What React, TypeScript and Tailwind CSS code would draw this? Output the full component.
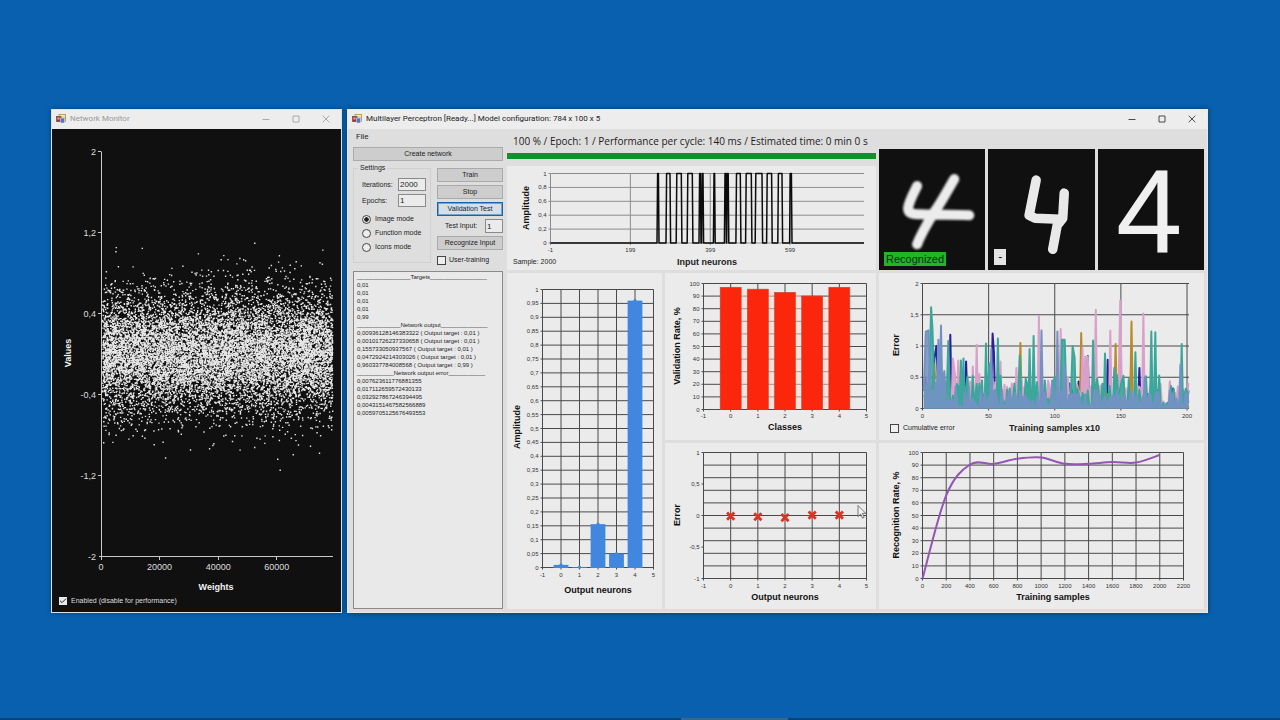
import { ReactNode } from "react";
import { Check } from "lucide-react";

type Series = { color: string; peaks: [number, number][]; noise: number; seed: number; filled?: boolean };

type ChartProps = {
  label: string;
  width: number;
  height: number;
  plot: { left: number; right: number; top: number; bottom: number };
  xRange: [number, number];
  yRange: [number, number];
  xTicks: number[];
  yTicks: number[];
  xGrid?: number[];
  yGrid?: number[];
  gridColor?: string;
  tickLabelY: number;
  xTitle?: string;
  xTitleAt?: [number, number];
  yTitle: string;
  yTitleAt: [number, number];
  yFormat?: (v: number) => string;
  children: (sx: (v: number) => number, sy: (v: number) => number) => ReactNode;
};

const range = (from: number, to: number, step: number) =>
  Array.from({ length: Math.round((to - from) / step) + 1 }, (_, i) => Number((from + i * step).toFixed(4)));

const comma = (v: number) => String(v).replace(".", ",");

// Small seeded generator so the plots are the same on every render
const random = (seed: number) => {
  let s = seed;
  return () => {
    s = (s + 0x6d2b79f5) | 0;
    let t = Math.imul(s ^ (s >>> 15), 1 | s);
    t = (t + Math.imul(t ^ (t >>> 7), 61 | t)) ^ t;
    return ((t ^ (t >>> 14)) >>> 0) / 4294967296;
  };
};

const weightDots = () => {
  const rnd = random(42);
  let d = "";
  for (let i = 0; i < 12000; i++) {
    const x = 50 + rnd() * 230;
    const g = Math.sqrt(-2 * Math.log(rnd() + 1e-9)) * Math.cos(2 * Math.PI * rnd());
    const y = 224 + g * 30;
    d += `M${x.toFixed(1)} ${y.toFixed(1)}h1.4`;
  }
  return d;
};

const WEIGHTS = weightDots();

const TARGETS = ["0,01", "0,01", "0,01", "0,01", "0,99"];
const OUTPUTS = ["0,00936128146383322", "0,00101726237330658", "0,155733050937567", "0,0472924214303026", "0,960337784008568"];
const ERRORS = ["0,007623611776881355", "0,017112659572430133", "0,032927867246394495", "0,0043151467582566889", "0,0059705125676493553"];

const LOG = [
  "_".repeat(16) + "Targets" + "_".repeat(17),
  ...TARGETS,
  "_".repeat(13) + "Network output" + "_".repeat(14),
  ...OUTPUTS.map((o, i) => `${o} ( Output target : ${TARGETS[i]} )`),
  "_".repeat(11) + "Network output error" + "_".repeat(11),
  ...ERRORS,
].join("\n");

// Left and right edge of every pulse in the input signal
const PULSES = [
  [150.6, 151.4], [159.6, 163], [169.8, 174.3], [180.8, 185.3], [192.6, 193.4], [195.2, 196],
  [207, 207.6], [218, 218.8], [220.3, 221.2], [229.5, 233.3], [239.2, 244.3], [248.8, 255],
  [260.2, 264.6], [271.4, 275], [283.2, 284.4],
];

const SERIES: Series[] = [
  {
    color: "#2a1f9e", seed: 3, noise: 0.07,
    peaks: [[2, 0.5], [9, 0.8], [10.5, 1], [21, 1.18], [33, 0.75], [53, 1.2], [54, 0.9], [111, 0.4], [118, 0.43], [125, 0.84], [140, 0.78], [164, 0.65], [170, 0.23], [189.5, 0.32]],
  },
  {
    color: "#b98a26", seed: 5, noise: 0.07,
    peaks: [[5, 0.6], [9, 0.7], [15, 0.4], [74, 1.05], [110.5, 0.25], [120, 1.21], [146, 1.03], [152, 0.43], [154, 0.27], [158, 1.39], [191, 0.2]],
  },
  {
    color: "#d9a1c9", seed: 7, noise: 0.12, filled: true,
    peaks: [[4, 0.5], [23, 0.8], [24.5, 0.55], [27, 0.77], [38, 0.67], [41, 1.02], [43, 0.55], [59, 0.75], [62, 0.38], [67.5, 0.4], [71, 0.65], [88, 1.48], [100, 0.47], [104.5, 1.27], [121, 0.96], [123, 0.83], [125, 0.83], [131, 1.58], [134.5, 0.37], [142, 1.25], [149.5, 1.73], [167, 1.52], [193, 0.35], [201, 0.4]],
  },
  {
    color: "#3ba79b", seed: 11, noise: 0.13, filled: true,
    peaks: [[6.5, 1.62], [7.5, 1.3], [19.5, 1.08], [29, 0.77], [31, 0.8], [38, 0.52], [45, 0.45], [48, 1.04], [50.5, 0.72], [57, 1.12], [69.5, 0.4], [73.5, 0.85], [81, 0.95], [84, 1.16], [86.5, 0.42], [92.5, 0.45], [105.5, 1.1], [107.5, 1.1], [113.5, 1], [115, 0.82], [129, 1.09], [138, 0.88], [141.5, 0.36], [145, 0.65], [156, 0.47], [161, 0.9], [173, 1.23], [176, 1.22], [179, 0.53], [188, 0.36], [196, 1.03]],
  },
  {
    color: "#7392c4", seed: 13, noise: 0.07, filled: true,
    peaks: [[2.5, 1.23], [4.5, 1.25], [12, 1.1], [14, 1.33], [16.5, 0.6], [25, 0.35], [35, 0.35], [44, 0.3], [52, 0.95], [60, 0.3], [90, 1.25], [98, 0.45], [102, 1.23], [107.5, 0.7], [168, 0.5], [195, 0.7], [199, 0.25]],
  },
];

const seriesPoints = (s: Series): [number, number][] => {
  const rnd = random(s.seed);
  const pts: [number, number][] = [];
  for (let i = 1; i <= 201; i++) {
    const r = rnd();
    if (s.peaks.some(([p]) => Math.abs(p - i) < 1)) continue;
    if (s.peaks.some(([p]) => Math.abs(p - i) < 2)) {
      pts.push([i, i < 18 ? 0.3 : 0.03]);
      continue;
    }
    const early = i < 18 ? 0.2 : 0.02;
    const calm = i > 180 && i < 187 ? 0.2 : 1;
    pts.push([i, early + r * r * s.noise * 4 * calm]);
  }
  s.peaks.forEach((p) => pts.push(p));
  return pts.sort((a, b) => a[0] - b[0]);
};

const RATE: [number, number][] = [
  [0, 0], [200, 66], [400, 90.5], [600, 91], [800, 95], [1000, 96], [1200, 91], [1400, 91], [1600, 92.5], [1800, 92], [2000, 98],
];

// Catmull-Rom spline written as cubic Béziers
const spline = (p: [number, number][]) => {
  let d = `M${p[0][0]} ${p[0][1]}`;
  for (let i = 0; i < p.length - 1; i++) {
    const a = p[i - 1] ?? p[i];
    const b = p[i];
    const c = p[i + 1];
    const e = p[i + 2] ?? c;
    d += `C${b[0] + (c[0] - a[0]) / 6} ${b[1] + (c[1] - a[1]) / 6} ${c[0] - (e[0] - b[0]) / 6} ${c[1] - (e[1] - b[1]) / 6} ${c[0]} ${c[1]}`;
  }
  return d;
};

const Chart = ({
  label, width, height, plot, xRange, yRange, xTicks, yTicks, xGrid = xTicks, yGrid = yTicks,
  gridColor = "#4a4a4a", tickLabelY, xTitle, xTitleAt, yTitle, yTitleAt, yFormat = comma, children,
}: ChartProps) => {
  const sx = (v: number) => plot.left + ((v - xRange[0]) / (xRange[1] - xRange[0])) * (plot.right - plot.left);
  const sy = (v: number) => plot.bottom - ((v - yRange[0]) / (yRange[1] - yRange[0])) * (plot.bottom - plot.top);
  return (
    <svg viewBox={`0 0 ${width} ${height}`} className="block w-full font-['Liberation_Sans',sans-serif]" role="img" aria-label={label}>
      <g stroke={gridColor} strokeWidth="1">
        {xGrid.map((v) => <path key={`x${v}`} d={`M${sx(v)} ${plot.top}V${plot.bottom + 2}`} />)}
        {yGrid.map((v) => <path key={`y${v}`} d={`M${plot.left} ${sy(v)}H${plot.right}`} />)}
        {yTicks.map((v) => <path key={`t${v}`} d={`M${plot.left - 2} ${sy(v)}h2`} />)}
      </g>
      {children(sx, sy)}
      <g fontSize="6" fill="#333">
        {xTicks.map((v) => <text key={v} x={sx(v)} y={tickLabelY + 2} textAnchor="middle">{v}</text>)}
        {yTicks.map((v) => <text key={v} x={plot.left - 4} y={sy(v) + 2} textAnchor="end">{yFormat(v)}</text>)}
      </g>
      <g fontSize="9" fontWeight="700" fill="#111" textAnchor="middle">
        {xTitle && xTitleAt && <text x={xTitleAt[0]} y={xTitleAt[1] + 3}>{xTitle}</text>}
        <text transform={`translate(${yTitleAt[0] + 3} ${yTitleAt[1]}) rotate(-90)`}>{yTitle}</text>
      </g>
    </svg>
  );
};

const AppIcon = () => (
  <svg viewBox="0 0 10 10" className="size-[10px] shrink-0" aria-hidden="true">
    <rect x="3" y="0.5" width="6.5" height="7" fill="#e3c65c" stroke="#8d7a3a" strokeWidth="0.6" />
    <rect x="3.5" y="1" width="5.5" height="1.5" fill="#f7edc0" />
    <rect x="0.5" y="2.5" width="4.5" height="5" fill="#a5323a" stroke="#6d3434" strokeWidth="0.6" />
    <rect x="4.5" y="4" width="4" height="5" fill="#4a7ac0" stroke="#dfe6ee" strokeWidth="0.6" />
    <path d="M1.5 3.5h2v2h-2z" fill="#e8b5a8" />
  </svg>
);

const TitleBar = ({ title, active }: { title: string; active?: boolean }) => (
  <header className={`flex h-[19px] items-center bg-[#ededed] pb-0.5 pl-1 ${active ? "text-[#222]" : "text-[#999]"}`}>
    <AppIcon />
    <h1 className="min-w-0 flex-1 truncate pl-1 font-[Roboto,sans-serif] text-[8px] leading-3">{title}</h1>
    <button type="button" aria-label="Minimize" className="flex h-full w-[30px] items-center justify-center">
      <svg viewBox="0 0 8 8" className="size-2" stroke="currentColor" strokeWidth="0.8" fill="none"><path d="M0.5 4.5h7" /></svg>
    </button>
    <button type="button" aria-label="Maximize" className="flex h-full w-[30px] items-center justify-center">
      <svg viewBox="0 0 8 8" className="size-2" stroke="currentColor" strokeWidth="0.8" fill="none"><path d="M1 1h6v6h-6z" /></svg>
    </button>
    <button type="button" aria-label="Close" className="flex h-full w-[30px] items-center justify-center">
      <svg viewBox="0 0 8 8" className="size-2" stroke="currentColor" strokeWidth="0.8" fill="none"><path d="M0.7 0.7l6.6 6.6M7.3 0.7l-6.6 6.6" /></svg>
    </button>
  </header>
);

const PushButton = ({ children, focused }: { children: ReactNode; focused?: boolean }) => (
  <button
    type="button"
    className={`h-[14px] w-full border text-center leading-3 ${focused ? "border-[#1565ad] bg-[#d3e0ea] ring-1 ring-[#1565ad]/50 ring-inset" : "border-[#aaa] bg-[#cdcdcd]"}`}
  >
    {children}
  </button>
);

const Panel = ({ children }: { children: ReactNode }) => <section className="bg-[#ebebeb]">{children}</section>;

const NetworkMonitor = () => (
  <article className="flex min-w-0 flex-col border border-[#d8e2ea] bg-[#101010] shadow-[0_0_4px_rgba(0,0,0,0.35)]">
    <TitleBar title="Network Monitor" />
    <svg viewBox="0 0 289 466" className="block w-full font-['Liberation_Sans',sans-serif]" role="img" aria-label="Weights">
      <path d={WEIGHTS} stroke="#e6e6e6" strokeWidth="1.4" />
      <g stroke="#c9c9c9" fill="none">
        <path d="M49.5 22.5V431M47 427.5H281" />
        {[22.5, 103.5, 184.5, 265.5, 346.5].map((y) => <path key={y} d={`M46 ${y}h3`} />)}
        {[107.5, 166.5, 224.5].map((x) => <path key={x} d={`M${x} 427v4`} />)}
      </g>
      <g fontSize="9" fill="#dedede">
        {["2", "1,2", "0,4", "-0,4", "-1,2", "-2"].map((t, i) => (
          <text key={t} x="44" y={26 + i * 81} textAnchor="end">{t}</text>
        ))}
        {["0", "20000", "40000", "60000"].map((t, i) => (
          <text key={t} x={49 + i * 58.6} y="441" textAnchor="middle">{t}</text>
        ))}
        <g fontWeight="700" fill="#f2f2f2" textAnchor="middle">
          <text x="164" y="461">Weights</text>
          <text transform="translate(19 224) rotate(-90)">Values</text>
        </g>
      </g>
    </svg>
    <label className="flex h-3 items-center gap-1 pl-[7px] text-[7px] text-[#dedede]">
      <span className="relative size-2">
        <input type="checkbox" defaultChecked className="peer block size-2 appearance-none bg-[#e8e8e8]" />
        <Check className="pointer-events-none absolute inset-0 hidden size-2 text-[#222] peer-checked:block" strokeWidth={3} />
      </span>
      Enabled (disable for performance)
    </label>
  </article>
);

const ControlPanel = () => (
  <div className="flex min-w-0 flex-col pr-px">
    <nav className="flex h-[18px] items-center px-[3px] pb-0.5 font-[Roboto,sans-serif] text-[8px]">
      <button type="button" className="leading-3">File</button>
    </nav>
    <PushButton>Create network</PushButton>
    <div className="flex items-start justify-between pt-[3px]">
      <fieldset className="min-w-0 flex-1 border border-[#d0d0d0] px-1 pt-[6px] pb-2">
        <legend className="px-0.5 leading-2">Settings</legend>
        <label className="flex items-center justify-between pl-1">
          Iterations:
          <input type="text" defaultValue="2000" className="h-[13px] w-7 border border-[#8a8a8a] bg-[#ebebeb] px-px text-[8px]" />
        </label>
        <label className="mt-[3px] flex items-center justify-between pl-1">
          Epochs:
          <input type="text" defaultValue="1" className="h-[13px] w-7 border border-[#8a8a8a] bg-[#ebebeb] px-px text-[8px]" />
        </label>
        <div className="pt-[5px]">
          {["Image mode", "Function mode", "Icons mode"].map((mode, i) => (
            <label key={mode} className="flex h-[14px] items-center gap-1 pl-1 whitespace-nowrap">
              <input
                type="radio"
                name="mode"
                defaultChecked={i === 0}
                className="size-[9px] shrink-0 appearance-none rounded-full border border-[#444] bg-[#ededed] checked:bg-[radial-gradient(circle,#222_40%,transparent_50%)]"
              />
              {mode}
            </label>
          ))}
        </div>
      </fieldset>
      <div className="ml-[6px] flex w-[66px] flex-col gap-[3px] pt-1">
        <PushButton>Train</PushButton>
        <PushButton>Stop</PushButton>
        <PushButton focused>Validation Test</PushButton>
        <label className="flex h-[14px] items-center justify-between pl-2">
          Test Input:
          <input type="text" defaultValue="1" className="h-[14px] w-[18px] border border-[#8a8a8a] bg-[#ebebeb] px-px text-[8px]" />
        </label>
        <PushButton>Recognize Input</PushButton>
        <label className="flex h-[14px] items-center gap-[3px]">
          <input type="checkbox" className="size-[9px] appearance-none border border-[#444] bg-[#ededed] checked:bg-[#444]" />
          User-training
        </label>
      </div>
    </div>
    <textarea
      readOnly
      aria-label="Network log"
      value={LOG}
      className="mt-1 block w-full flex-1 resize-none overflow-hidden border border-[#8a8a8a] bg-[#e9e9e9] px-[3px] py-px text-[6px] leading-2 whitespace-pre"
    />
  </div>
);

const InputChart = () => (
  <Panel>
    <Chart
      label="Input neurons" width={369} height={88}
      plot={{ left: 43.5, right: 357, top: 7.5, bottom: 77 }}
      xRange={[-1, 784]} yRange={[0, 1]}
      xTicks={[-1, 199, 399, 599]} yTicks={range(0, 1, 0.2)} gridColor="#8c8c8c"
      tickLabelY={84} yTitle="Amplitude" yTitleAt={[19, 42]}
    >
      {() => (
        <path
          d={"M43.5 77" + PULSES.map(([a, b]) => `L${a - 0.6} 77L${a} 7.5L${b} 7.5L${b + 0.6} 77`).join("") + "L357 77"}
          fill="none" stroke="#0c0c0c" strokeWidth="1.5" strokeLinejoin="round"
        />
      )}
    </Chart>
    <div className="grid h-4 grid-cols-[170fr_199fr] items-center">
      <span className="pl-[6px]">Sample: 2000</span>
      <span className="text-[9px] leading-3 font-bold">Input neurons</span>
    </div>
  </Panel>
);

const OutputChart = () => (
  <Panel>
    <Chart
      label="Output neurons" width={155} height={336}
      plot={{ left: 35.5, right: 146.5, top: 16.5, bottom: 294.5 }}
      xRange={[-1, 5]} yRange={[0, 1]} xTicks={range(-1, 5, 1)} yTicks={range(0, 1, 0.05)}
      tickLabelY={302} xTitle="Output neurons" xTitleAt={[91, 317]} yTitle="Amplitude" yTitleAt={[10, 154]}
    >
      {(sx, sy) =>
        [0.0094, 0.001, 0.156, 0.05, 0.96].map((v, i) => (
          <g key={i} fill="#4187e0">
            <rect x={sx(i) - 7.4} y={sy(v)} width="14.8" height={sy(0) - sy(v) + 0.5} />
            <circle cx={sx(i)} cy={sy(v)} r="1.6" />
          </g>
        ))
      }
    </Chart>
  </Panel>
);

const ClassesChart = () => (
  <Panel>
    <Chart
      label="Validation rate" width={211} height={167}
      plot={{ left: 38.5, right: 201.5, top: 10.5, bottom: 136.5 }}
      xRange={[-1, 5]} yRange={[0, 100]} xTicks={range(-1, 5, 1)} yTicks={range(0, 100, 10)}
      tickLabelY={143} xTitle="Classes" xTitleAt={[120, 154]} yTitle="Validation Rate, %" yTitleAt={[12, 73]}
    >
      {(sx, sy) =>
        [97, 95.5, 93, 90, 97].map((v, i) => (
          <g key={i}>
            {i < 4 && <rect x={sx(i) + 10} y={sy(v) + 3} width="7" height={sy(0) - sy(v) - 4} fill="#ffd9d2" fillOpacity="0.5" />}
            <rect x={sx(i) - 10.5} y={sy(v)} width="21" height={sy(0) - sy(v)} fill="#fc260d" stroke="#c9452f" strokeWidth="0.6" />
          </g>
        ))
      }
    </Chart>
  </Panel>
);

const ErrorChart = () => (
  <Panel>
    <Chart
      label="Error" width={211} height={166}
      plot={{ left: 38.5, right: 201.5, top: 9.5, bottom: 135.5 }}
      xRange={[-1, 5]} yRange={[-1, 1]} xTicks={range(-1, 5, 1)} yTicks={range(-1, 1, 0.5)} yGrid={range(-1, 1, 0.2)}
      tickLabelY={143} xTitle="Output neurons" xTitleAt={[120, 154]} yTitle="Error" yTitleAt={[12, 72]}
    >
      {(sx, sy) => (
        <>
          {[-0.01, -0.02, -0.035, 0.005, 0.005].map((v, i) => (
            <path key={i} d={`M${sx(i) - 3.6} ${sy(v) - 3.6}l7.2 7.2m0 -7.2l-7.2 7.2`} stroke="#dd3322" strokeWidth="2.8" />
          ))}
          <path d="M193 62.5v11l2.6-2.4 1.9 4 1.7-.8-1.8-3.9h3.4z" fill="#f2f2f2" stroke="#444" strokeWidth="0.7" />
        </>
      )}
    </Chart>
  </Panel>
);

const TrainingChart = () => (
  <Panel>
    <Chart
      label="Training error" width={325} height={147}
      plot={{ left: 43.5, right: 310, top: 10.5, bottom: 135.5 }}
      xRange={[0, 201.5]} yRange={[0, 2]} xTicks={range(0, 200, 50)} yTicks={range(0, 2, 0.5)}
      tickLabelY={143} yTitle="Error" yTitleAt={[17, 72]}
    >
      {(sx, sy) =>
        SERIES.map((s) => {
          const line = seriesPoints(s).map(([x, y]) => `${sx(x).toFixed(1)},${sy(y).toFixed(1)}`).join(" ");
          return (
            <g key={s.color}>
              {s.filled && <polygon points={`${sx(1)},${sy(0)} ${line} ${sx(201)},${sy(0)}`} fill={s.color} fillOpacity="0.85" />}
              <polyline points={line} fill="none" stroke={s.color} strokeWidth="2" strokeLinejoin="round" strokeLinecap="round" />
            </g>
          );
        })
      }
    </Chart>
    <div className="grid grid-cols-[130fr_195fr] items-center pb-1">
      <label className="flex h-4 items-center gap-1 pl-[11px]">
        <input type="checkbox" className="size-[9px] appearance-none border border-[#444] bg-[#f0f0f0] checked:bg-[#444]" />
        Cumulative error
      </label>
      <span className="text-[9px] leading-3 font-bold">Training samples x10</span>
    </div>
  </Panel>
);

const RateChart = () => (
  <Panel>
    <Chart
      label="Recognition rate" width={325} height={166}
      plot={{ left: 43.5, right: 304.5, top: 9.5, bottom: 135.5 }}
      xRange={[0, 2200]} yRange={[0, 100]} xTicks={range(0, 2200, 200)} yTicks={range(0, 100, 10)}
      tickLabelY={143} xTitle="Training samples" xTitleAt={[174, 154]} yTitle="Recognition Rate, %" yTitleAt={[17, 72]}
    >
      {(sx, sy) => <path d={spline(RATE.map(([x, y]) => [sx(x), sy(y)]))} fill="none" stroke="#9455b4" strokeWidth="2" />}
    </Chart>
  </Panel>
);

const Digits = () => (
  <div className="grid grid-cols-3 gap-[3px]">
    <figure className="relative bg-[#101010]">
      <svg viewBox="0 0 106 121" className="block w-full" role="img" aria-label="Sample digit">
        <g fill="none" stroke="#ececec" strokeWidth="10" strokeLinecap="round" strokeLinejoin="round" className="blur-[1px]">
          <path d="M38 37C34 45 30 52 29 59C29 65 35 65 42 65C58 66 74 65 90 66" />
          <path d="M75 30C69 40 63 52 55 63C49 73 42 84 38 95" />
        </g>
      </svg>
      <figcaption className="absolute bottom-1 left-[5px] bg-[#1fb527] px-0.5 text-[11px] leading-[14px] text-[#0a2e0c]">Recognized</figcaption>
    </figure>
    <figure className="relative bg-[#101010]">
      <svg viewBox="0 0 106 121" className="block w-full" role="img" aria-label="Drawn digit">
        <g fill="none" stroke="#e9e9e9" strokeWidth="9.5" strokeLinecap="round" strokeLinejoin="round">
          <path d="M48 31L41 66L47 69L72 70" />
          <path d="M76 44L74.5 69L69 76L64.5 100" />
        </g>
      </svg>
      <figcaption className="absolute bottom-[5px] left-[6px] w-3 bg-[#e4e4e4] text-center text-[12px] leading-4 text-[#111]">-</figcaption>
    </figure>
    <figure className="bg-[#101010]">
      <svg viewBox="0 0 106 121" className="block w-full overflow-visible" role="img" aria-label="Recognized digit">
        <text x="51" y="104" textAnchor="middle" fontSize="119" fill="#f0f0f0">4</text>
      </svg>
    </figure>
  </div>
);

const Perceptron = () => (
  <article className="flex min-w-0 flex-col border border-[#e6ebef] bg-[#dedede] shadow-[0_0_5px_rgba(0,0,0,0.45)]">
    <TitleBar title="Multilayer Perceptron [Ready...] Model configuration: 784 x 100 x 5" active />
    <div className="grid flex-1 grid-cols-[151fr_369fr_325fr] gap-[3px] pr-[3px] pb-[3px] pl-[5px]">
      <ControlPanel />
      <div className="flex min-w-0 flex-col">
        <p className="h-6 pl-[6px] font-['Open_Sans',sans-serif] text-[10px] leading-6 whitespace-nowrap">
          100 % / Epoch: 1 / Performance per cycle: 140 ms / Estimated time: 0 min 0 s
        </p>
        <div role="progressbar" aria-valuenow={100} className="mb-[7px] h-[6px] bg-[#12922f]" />
        <InputChart />
        <div className="mt-[3px] grid grid-cols-[155fr_211fr] gap-[3px]">
          <OutputChart />
          <div className="flex min-w-0 flex-col gap-[3px]">
            <ClassesChart />
            <ErrorChart />
          </div>
        </div>
      </div>
      <div className="flex min-w-0 flex-col gap-[3px] pt-5">
        <Digits />
        <TrainingChart />
        <RateChart />
      </div>
    </div>
  </article>
);

const App = () => (
  <div className="flex min-h-screen flex-col bg-[#0860ae] font-['Liberation_Sans',sans-serif] text-[7px] leading-[10px] text-[#1c1c1c]">
    <main className="grid grid-cols-[291fr_861fr] gap-[5px] pt-[109px] pr-[72px] pl-[51px]">
      <NetworkMonitor />
      <Perceptron />
    </main>
    <footer className="mt-auto grid h-0.5 grid-cols-[681fr_107fr_492fr] bg-[#0c4273]">
      <span />
      <span className="bg-[#38668c]" />
    </footer>
  </div>
);

export default App;
